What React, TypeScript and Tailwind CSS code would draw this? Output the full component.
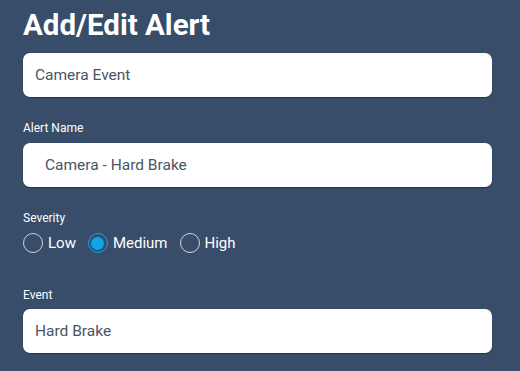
import { useState } from "react";

const inputClass =
  "h-[44px] w-full rounded-[7px] bg-white text-[15.5px] text-[#4a5568] shadow-[0_1px_1px_rgba(0,0,0,0.35)] outline-none";

const labelClass = "text-[12px] leading-none text-white";

function Radio({ label, checked, onChange }: { label: string; checked: boolean; onChange: () => void }) {
  return (
    <label className="flex cursor-pointer items-center gap-[5px]" onClick={onChange}>
      <span
        className={
          checked
            ? "flex h-[20px] w-[20px] items-center justify-center rounded-full border-[1.5px] border-[#0ea5e9]"
            : "h-[20px] w-[20px] rounded-full border-[1.5px] border-[#d1d5db]"
        }
      >
        {checked ? <span className="h-[13px] w-[13px] rounded-full bg-[#0ea5e9]" /> : null}
      </span>
      <span className="text-[15px] text-white">{label}</span>
    </label>
  );
}

export default function App() {
  const [severity, setSeverity] = useState("Medium");

  return (
    <div className="h-[371px] w-[520px] overflow-hidden bg-[#374d69] pl-[23px] pr-[28px] font-['Roboto',sans-serif]">
      <h1 className="pt-[8px] text-[29.5px] font-bold leading-[34px] text-white">Add/Edit Alert</h1>

      <input className={`${inputClass} mt-[11px] px-[12px]`} defaultValue="Camera Event" readOnly />

      <div className={`${labelClass} mt-[25px]`}>Alert Name</div>
      <input className={`${inputClass} mt-[9px] px-[22px]`} defaultValue="Camera - Hard Brake" readOnly />

      <div className={`${labelClass} mt-[25px]`}>Severity</div>
      <div className="mt-[8px] flex items-center gap-[12px]">
        {["Low", "Medium", "High"].map((s) => (
          <Radio key={s} label={s} checked={severity === s} onChange={() => setSeverity(s)} />
        ))}
      </div>

      <div className={`${labelClass} mt-[34px]`}>Event</div>
      <input className={`${inputClass} mt-[8px] px-[12px]`} defaultValue="Hard Brake" readOnly />
    </div>
  );
}
